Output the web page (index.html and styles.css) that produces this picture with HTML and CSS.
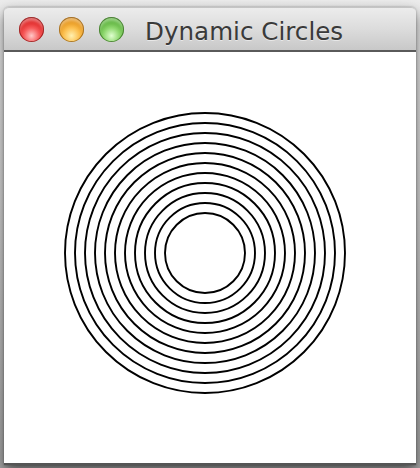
FILE: index.html
```html
<!DOCTYPE html>
<html>
<head>
<meta charset="utf-8">
<link rel="stylesheet" href="styles.css">
</head>
<body>
<div class="window">
  <div class="titlebar">
    <div class="lights">
      <span class="light red"></span>
      <span class="light yellow"></span>
      <span class="light green"></span>
    </div>
    <div class="title">Dynamic Circles</div>
  </div>
  <div class="content">
    <svg class="canvas" width="412" height="409" viewBox="0 0 412 409">
      <g fill="none" stroke="#000" stroke-width="1.9">
        <circle cx="201" cy="201" r="40"/>
        <circle cx="201" cy="201" r="50"/>
        <circle cx="201" cy="201" r="60"/>
        <circle cx="201" cy="201" r="70"/>
        <circle cx="201" cy="201" r="80"/>
        <circle cx="201" cy="201" r="90"/>
        <circle cx="201" cy="201" r="100"/>
        <circle cx="201" cy="201" r="110"/>
        <circle cx="201" cy="201" r="120"/>
        <circle cx="201" cy="201" r="130"/>
        <circle cx="201" cy="201" r="140"/>
      </g>
    </svg>
  </div>
</div>
</body>
</html>
```
FILE: styles.css
```css
html, body {
  margin: 0;
  padding: 0;
}
body {
  width: 420px;
  height: 468px;
  overflow: hidden;
  background: linear-gradient(to bottom, #ececec 0%, #d8d8d8 40%, #a8a8a8 100%);
  padding-top: 7px;
  box-sizing: border-box;
}
.window {
  margin-left: 4px;
  width: 412px;
  height: 456px;
  display: flex;
  flex-direction: column;
  border-radius: 5px 5px 0 0;
  box-shadow: 0 6px 14px rgba(0, 0, 0, 0.55), 0 0 2px rgba(0, 0, 0, 0.35);
  background: #fff;
  border-bottom: 2px solid #555;
}
.titlebar {
  box-sizing: border-box;
  height: 45px;
  border-top: 1px solid #c4c4c4;
  border-radius: 5px 5px 0 0;
  background: linear-gradient(to bottom, #ececec 0%, #dcdcdc 50%, #c8c8c8 100%);
  border-bottom: 2px solid #5a5a5a;
  display: flex;
  align-items: center;
  padding-left: 15px;
}
.lights {
  display: flex;
  gap: 16px;
  margin-top: 1px;
}
.light {
  width: 25px;
  height: 25px;
  border-radius: 50%;
  box-sizing: border-box;
  display: block;
}
.lights .light + .light {
  margin-left: -1px;
}
.red {
  background: radial-gradient(circle at 50% 75%, #ffc8c8 0%, #f65a5a 35%, #d81818 70%, #8a0a0a 100%);
  box-shadow: inset 0 0 0 1px rgba(110, 0, 0, 0.6), inset 0 4px 3px rgba(255, 220, 220, 0.5);
}
.yellow {
  background: radial-gradient(circle at 50% 75%, #fff0b0 0%, #fcc050 35%, #e08c10 70%, #905000 100%);
  box-shadow: inset 0 0 0 1px rgba(120, 70, 0, 0.6), inset 0 4px 3px rgba(255, 240, 210, 0.5);
}
.green {
  background: radial-gradient(circle at 50% 75%, #e0ffd0 0%, #90d870 35%, #50a830 70%, #2a6a10 100%);
  box-shadow: inset 0 0 0 1px rgba(30, 80, 10, 0.6), inset 0 4px 3px rgba(230, 255, 220, 0.5);
}
.title {
  margin-left: 21px;
  font-family: "DejaVu Sans", "Liberation Sans", sans-serif;
  font-size: 24.6px;
  color: #3a3a3a;
  text-shadow: 0 1px 0 rgba(255, 255, 255, 0.5);
  margin-top: 4px;
}
.content {
  flex: 1;
  background: #fff;
}
.canvas {
  display: block;
}
```
